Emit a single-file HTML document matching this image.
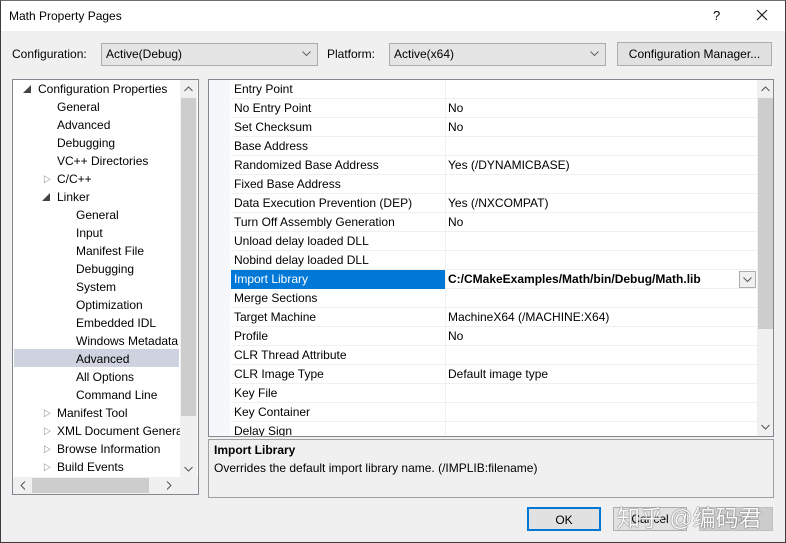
<!DOCTYPE html>
<html><head><meta charset="utf-8"><style>
*{margin:0;padding:0;box-sizing:border-box}
body{width:786px;height:543px;overflow:hidden;background:#f0f0f0;font-family:"Liberation Sans","Noto Sans CJK SC",sans-serif;font-size:12px;color:#000;position:relative}
.a{position:absolute;white-space:nowrap}
.combo{position:absolute;height:23px;background:#e5e5e5;border:1px solid #adadad;padding:3px 4px;line-height:15px}
.chev{position:absolute;right:6px;top:7px}
.btn{position:absolute;height:24px;background:#e1e1e1;border:1px solid #adadad;text-align:center;line-height:22px}
.row{position:absolute;left:22px;width:527px;height:19px;border-bottom:1px solid #f0f0f0;line-height:19px}
.row .n{position:absolute;left:3px}
.row .v{position:absolute;left:217px}
.row:after{content:"";position:absolute;left:214px;top:0;bottom:0;border-left:1px solid #f0f0f0}
.ti{position:absolute;height:18px;line-height:18px;white-space:nowrap}
.tri{position:absolute;font-size:8px;color:#444}
</style></head><body>
<div class="a" style="left:0;top:0;width:786px;height:543px;border:1px solid #3c3c3c;border-top:1px solid #6e6e6e"></div>
<div class="a" style="left:1px;top:1px;width:784px;height:30px;background:#fff"></div>
<div class="a" style="left:9px;top:9px;font-size:12px">Math Property Pages</div>
<div class="a" style="left:713px;top:8px;font-size:13px">?</div>
<svg class="a" style="left:756px;top:9px" width="12" height="12"><path d="M1 1L11 11M11 1L1 11" stroke="#222" stroke-width="1.2"/></svg>

<div class="a" style="left:12px;top:47px">Configuration:</div>
<div class="combo" style="left:101px;top:43px;width:217px">Active(Debug)<svg class="chev" width="9" height="6"><path d="M0.5 0.5L4.5 4.5L8.5 0.5" stroke="#606060" fill="none"/></svg></div>
<div class="a" style="left:327px;top:47px">Platform:</div>
<div class="combo" style="left:389px;top:43px;width:217px">Active(x64)<svg class="chev" width="9" height="6"><path d="M0.5 0.5L4.5 4.5L8.5 0.5" stroke="#606060" fill="none"/></svg></div>
<div class="btn" style="left:617px;top:42px;width:155px">Configuration Manager...</div>

<!-- tree -->
<div class="a" style="left:12px;top:79px;width:187px;height:416px;background:#fff;border:1px solid #828790;overflow:hidden">
 <div class="a" style="left:1px;top:269px;width:165px;height:18px;background:#cfd3e0"></div>
 <div class="ti" style="left:25px;top:0">Configuration Properties</div><span class="tri" style="left:10px;top:4px">◢</span>
 <div class="ti" style="left:44px;top:18px">General</div>
 <div class="ti" style="left:44px;top:36px">Advanced</div>
 <div class="ti" style="left:44px;top:54px">Debugging</div>
 <div class="ti" style="left:44px;top:72px">VC++ Directories</div>
 <div class="ti" style="left:44px;top:90px">C/C++</div><span class="tri" style="left:30px;top:94px">▷</span>
 <div class="ti" style="left:44px;top:108px">Linker</div><span class="tri" style="left:29px;top:112px">◢</span>
 <div class="ti" style="left:63px;top:126px">General</div>
 <div class="ti" style="left:63px;top:144px">Input</div>
 <div class="ti" style="left:63px;top:162px">Manifest File</div>
 <div class="ti" style="left:63px;top:180px">Debugging</div>
 <div class="ti" style="left:63px;top:198px">System</div>
 <div class="ti" style="left:63px;top:216px">Optimization</div>
 <div class="ti" style="left:63px;top:234px">Embedded IDL</div>
 <div class="ti" style="left:63px;top:252px">Windows Metadata</div>
 <div class="ti" style="left:63px;top:270px">Advanced</div>
 <div class="ti" style="left:63px;top:288px">All Options</div>
 <div class="ti" style="left:63px;top:306px">Command Line</div>
 <div class="ti" style="left:44px;top:324px">Manifest Tool</div><span class="tri" style="left:30px;top:328px">▷</span>
 <div class="ti" style="left:44px;top:342px">XML Document Genera</div><span class="tri" style="left:30px;top:346px">▷</span>
 <div class="ti" style="left:44px;top:360px">Browse Information</div><span class="tri" style="left:30px;top:364px">▷</span>
 <div class="ti" style="left:44px;top:378px">Build Events</div><span class="tri" style="left:30px;top:382px">▷</span>
 <div class="a" style="left:167px;top:0;width:17px;height:397px;background:#f0f0f0"></div>
 <div class="a" style="left:168px;top:18px;width:15px;height:318px;background:#cdcdcd"></div>
 <svg class="a" style="left:171px;top:6px" width="9" height="6"><path d="M0.5 5L4.5 1L8.5 5" stroke="#555" fill="none"/></svg>
 <svg class="a" style="left:171px;top:386px" width="9" height="6"><path d="M0.5 1L4.5 5L8.5 1" stroke="#555" fill="none"/></svg>
 <div class="a" style="left:0;top:397px;width:185px;height:17px;background:#f0f0f0"></div>
 <div class="a" style="left:19px;top:398px;width:117px;height:15px;background:#cdcdcd"></div>
 <svg class="a" style="left:7px;top:401px" width="6" height="9"><path d="M5 0.5L1 4.5L5 8.5" stroke="#555" fill="none"/></svg>
 <svg class="a" style="left:153px;top:401px" width="6" height="9"><path d="M1 0.5L5 4.5L1 8.5" stroke="#555" fill="none"/></svg>
</div>

<!-- grid -->
<div class="a" style="left:208px;top:79px;width:566px;height:358px;background:#fff;border:1px solid #828790;overflow:hidden">
 <div class="a" style="left:0;top:0;width:21px;height:358px;background:#f5f7fb"></div>
 <div class="row" style="top:0"><span class="n">Entry Point</span></div>
 <div class="row" style="top:19px"><span class="n">No Entry Point</span><span class="v">No</span></div>
 <div class="row" style="top:38px"><span class="n">Set Checksum</span><span class="v">No</span></div>
 <div class="row" style="top:57px"><span class="n">Base Address</span></div>
 <div class="row" style="top:76px"><span class="n">Randomized Base Address</span><span class="v">Yes (/DYNAMICBASE)</span></div>
 <div class="row" style="top:95px"><span class="n">Fixed Base Address</span></div>
 <div class="row" style="top:114px"><span class="n">Data Execution Prevention (DEP)</span><span class="v">Yes (/NXCOMPAT)</span></div>
 <div class="row" style="top:133px"><span class="n">Turn Off Assembly Generation</span><span class="v">No</span></div>
 <div class="row" style="top:152px"><span class="n">Unload delay loaded DLL</span></div>
 <div class="row" style="top:171px"><span class="n">Nobind delay loaded DLL</span></div>
 <div class="row" style="top:190px"><div class="a" style="left:0;top:0;width:214px;height:19px;background:#0078d7"></div><span class="n" style="color:#fff">Import Library</span><span class="v" style="font-weight:bold">C:/CMakeExamples/Math/bin/Debug/Math.lib</span>
  <div class="a" style="left:508px;top:1px;width:17px;height:17px;border:1px solid #adadad;background:#f0f0f0"><svg style="position:absolute;left:3px;top:5px" width="9" height="6"><path d="M0.5 0.5L4.5 4.5L8.5 0.5" stroke="#555" fill="none"/></svg></div></div>
 <div class="row" style="top:209px"><span class="n">Merge Sections</span></div>
 <div class="row" style="top:228px"><span class="n">Target Machine</span><span class="v">MachineX64 (/MACHINE:X64)</span></div>
 <div class="row" style="top:247px"><span class="n">Profile</span><span class="v">No</span></div>
 <div class="row" style="top:266px"><span class="n">CLR Thread Attribute</span></div>
 <div class="row" style="top:285px"><span class="n">CLR Image Type</span><span class="v">Default image type</span></div>
 <div class="row" style="top:304px"><span class="n">Key File</span></div>
 <div class="row" style="top:323px"><span class="n">Key Container</span></div>
 <div class="row" style="top:342px"><span class="n">Delay Sign</span></div>
 <div class="a" style="left:548px;top:0;width:17px;height:356px;background:#f0f0f0"></div>
 <div class="a" style="left:549px;top:18px;width:15px;height:231px;background:#cdcdcd"></div>
 <svg class="a" style="left:552px;top:6px" width="9" height="6"><path d="M0.5 5L4.5 1L8.5 5" stroke="#555" fill="none"/></svg>
 <svg class="a" style="left:552px;top:344px" width="9" height="6"><path d="M0.5 1L4.5 5L8.5 1" stroke="#555" fill="none"/></svg>
</div>

<div class="a" style="left:208px;top:439px;width:566px;height:59px;border:1px solid #a0a0a0"></div>
<div class="a" style="left:214px;top:443px;font-weight:bold">Import Library</div>
<div class="a" style="left:214px;top:461px">Overrides the default import library name. (/IMPLIB:filename)</div>

<div class="btn" style="left:527px;top:507px;width:74px;border:2px solid #0078d7;background:#e1e1e1">OK</div>
<div class="btn" style="left:613px;top:507px;width:74px">Cancel</div>
<div class="btn" style="left:699px;top:507px;width:74px;background:#cccccc;border-color:#bfbfbf;color:#a0a0a0">Apply</div>
<div class="a" style="left:617px;top:499px;font-size:23px;color:#fafafa;text-shadow:0 0 1px #555,0 0 1px #555">知乎 @编码君</div>
</body></html>
